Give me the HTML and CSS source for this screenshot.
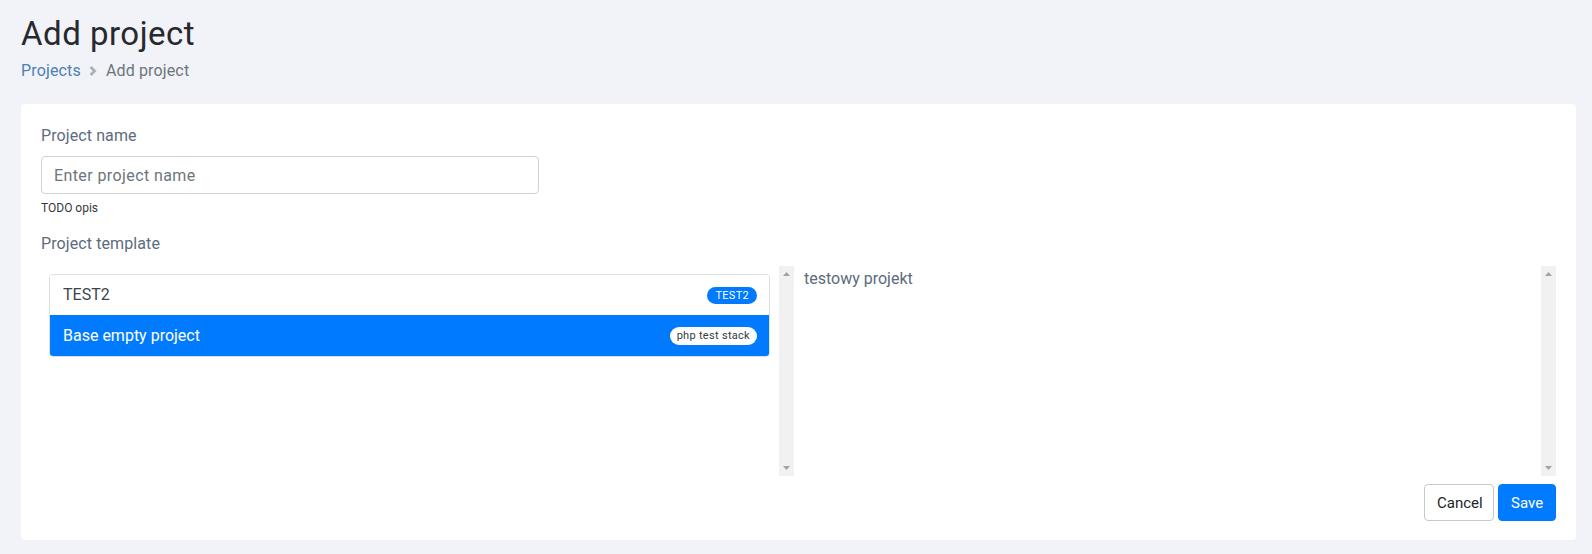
FILE: index.html
```html
<!DOCTYPE html>
<html lang="en">
<head>
<meta charset="utf-8">
<title>Add project</title>
<link rel="stylesheet" href="styles.css">
</head>
<body>
<div class="page">
  <h1 class="page-title">Add project</h1>
  <nav class="breadcrumb">
    <a class="crumb-link" href="#">Projects</a>
    <svg class="crumb-sep" width="8" height="10" viewBox="0 0 8 10"><path d="M1.6 1 L5.6 5 L1.6 9" fill="none" stroke="#a9b1ba" stroke-width="2.7"/></svg>
    <span class="crumb-current">Add project</span>
  </nav>
  <div class="card">
    <label class="field-label" for="pname">Project name</label>
    <input id="pname" class="text-input" type="text" placeholder="Enter project name">
    <div class="help-text">TODO opis</div>
    <div class="field-label template-label">Project template</div>
    <div class="template-row">
      <div class="pane">
        <div class="list-box">
          <div class="list-group">
            <div class="list-item">
              <span>TEST2</span>
              <span class="badge badge-blue">TEST2</span>
            </div>
            <div class="list-item active">
              <span>Base empty project</span>
              <span class="badge badge-white">php test stack</span>
            </div>
          </div>
        </div>
        <div class="vscroll">
          <svg width="7" height="4" viewBox="0 0 7 4"><polygon points="0,4 3.5,0 7,4" fill="#a3a3a3"/></svg>
          <svg width="7" height="4" viewBox="0 0 7 4"><polygon points="0,0 7,0 3.5,4" fill="#a3a3a3"/></svg>
        </div>
      </div>
      <div class="pane">
        <textarea class="desc-box" readonly>testowy projekt</textarea>
        <div class="vscroll">
          <svg width="7" height="4" viewBox="0 0 7 4"><polygon points="0,4 3.5,0 7,4" fill="#a3a3a3"/></svg>
          <svg width="7" height="4" viewBox="0 0 7 4"><polygon points="0,0 7,0 3.5,4" fill="#a3a3a3"/></svg>
        </div>
      </div>
    </div>
    <div class="actions">
      <button class="btn btn-cancel" type="button">Cancel</button>
      <button class="btn btn-save" type="button">Save</button>
    </div>
  </div>
</div>
</body>
</html>
```
FILE: styles.css
```css
html, body {
  margin: 0;
  padding: 0;
}
body {
  background: #f2f3f8;
  font-family: Roboto, "Liberation Sans", sans-serif;
  color: #212529;
}
.page {
  padding: 15px 16px 14px 21px;
}
.page-title {
  margin: 0;
  font-size: 33px;
  font-weight: 400;
  line-height: 38px;
  letter-spacing: 0.5px;
  color: #26292d;
}
.breadcrumb {
  margin-top: 6px;
  display: flex;
  align-items: center;
  font-size: 16px;
  line-height: 24px;
  letter-spacing: 0.15px;
}
.crumb-link {
  color: #4d7fb3;
  text-decoration: none;
}
.crumb-sep {
  display: block;
  margin: 0 9px 0 8px;
}
.crumb-current {
  color: #6c757d;
}
.card {
  margin-top: 21px;
  background: #fff;
  border-radius: 4px;
  padding: 20px 20px 19px 20px;
}
.field-label {
  display: block;
  font-size: 16px;
  line-height: 24px;
  letter-spacing: 0.1px;
  color: #5c6b7e;
  margin-bottom: 8px;
}
.text-input {
  display: block;
  box-sizing: border-box;
  width: 498px;
  height: 38px;
  border: 1px solid #ced4da;
  border-radius: 4px;
  padding: 6px 12px;
  font-family: inherit;
  font-size: 16px;
  letter-spacing: 0.4px;
  color: #495057;
  outline: none;
}
.text-input::placeholder {
  color: #6c757d;
}
.help-text {
  margin-top: 5px;
  font-size: 12px;
  line-height: 18px;
  color: #343a40;
  font-weight: 400;
}
.template-label {
  margin-top: 15px;
  margin-bottom: 10px;
}
.template-row {
  display: grid;
  grid-template-columns: 753px 1fr;
  height: 210px;
}
.pane {
  display: flex;
  height: 210px;
  min-width: 0;
}
.list-box {
  flex: 1;
  min-width: 0;
  padding: 8px 9px 8px 8px;
}
.vscroll {
  flex: 0 0 15px;
  width: 15px;
  background: #f1f1f1;
  display: flex;
  flex-direction: column;
  justify-content: space-between;
  align-items: center;
  padding: 6px 0;
  box-sizing: border-box;
}
.vscroll svg {
  display: block;
}
.list-group {
  border: 1px solid #dfdfdf;
  border-radius: 4px;
  overflow: hidden;
}
.list-item {
  display: flex;
  justify-content: space-between;
  align-items: center;
  padding: 8px 12px 8px 13px;
  font-size: 16px;
  line-height: 24px;
  color: #3b4450;
  background: #fff;
}
.list-item.active {
  background: #007bff;
  color: #fff;
  border-top: 1px solid #007bff;
}
.badge {
  display: inline-block;
  font-size: 11px;
  line-height: 12px;
  border-radius: 9px;
  padding: 3px 8px 2px;
  letter-spacing: 0.3px;
}
.badge-blue {
  background: #007bff;
  color: #fff;
}
.badge-white {
  background: #fff;
  color: #343a40;
  padding: 3px 7px 3px;
}
.desc-box {
  flex: 1;
  min-width: 0;
  box-sizing: border-box;
  height: 210px;
  border: none;
  resize: none;
  overflow: hidden;
  outline: none;
  padding: 1px 10px;
  margin: 0;
  font-family: inherit;
  font-size: 16px;
  line-height: 24px;
  color: #5c6b7e;
  background: #fff;
}
.actions {
  margin-top: 8px;
  display: flex;
  justify-content: flex-end;
  gap: 4px;
}
.btn {
  height: 37px;
  border-radius: 4px;
  font-family: inherit;
  font-size: 15px;
  padding: 0 12px;
  cursor: pointer;
}
.btn-cancel {
  background: #fff;
  border: 1px solid #c8c8c8;
  color: #212529;
  width: 70px;
}
.btn-save {
  background: #007bff;
  border: 1px solid #007bff;
  color: #fff;
  width: 58px;
}
```
